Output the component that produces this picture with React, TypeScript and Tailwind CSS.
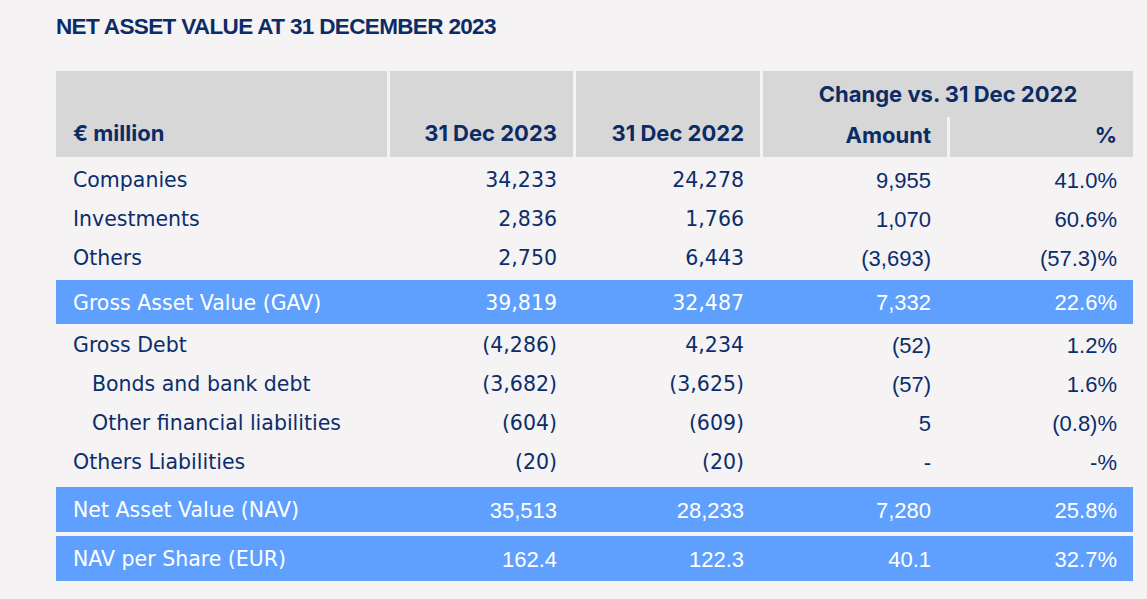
import React from 'react';

type Row = {
  label: string;
  values: [string, string, string, string];
  kind: 'plain' | 'sub' | 'band';
};

const body: Row[] = [
  { label: 'Companies', values: ['34,233', '24,278', '9,955', '41.0%'], kind: 'plain' },
  { label: 'Investments', values: ['2,836', '1,766', '1,070', '60.6%'], kind: 'plain' },
  { label: 'Others', values: ['2,750', '6,443', '(3,693)', '(57.3)%'], kind: 'plain' },
];

const debt: Row[] = [
  { label: 'Gross Debt', values: ['(4,286)', '4,234', '(52)', '1.2%'], kind: 'plain' },
  { label: 'Bonds and bank debt', values: ['(3,682)', '(3,625)', '(57)', '1.6%'], kind: 'sub' },
  { label: 'Other financial liabilities', values: ['(604)', '(609)', '5', '(0.8)%'], kind: 'sub' },
  { label: 'Others Liabilities', values: ['(20)', '(20)', '-', '-%'], kind: 'plain' },
];

const cols = 'grid grid-cols-[331px_183px_184px_184px_183px] gap-x-[3px]';
const geo = "font-['DejaVu_Sans',sans-serif] text-[20.5px]";
const arial = "font-['Liberation_Sans',Arial,sans-serif] text-[22px]";

const TableRow: React.FC<{ row: Row; height: string; arialAll?: boolean }> = ({ row, height, arialAll }) => {
  const band = row.kind === 'band';
  return (
    <div
      className={`${cols} ${height} leading-none pt-[2px] ${
        band ? 'bg-[#5f9ffe] text-white' : 'text-[#0c2d6b]'
      }`}
    >
      <div className={`flex items-center ${geo} ${row.kind === 'sub' ? 'pl-[36px]' : 'pl-[17px]'}`}>
        {row.label}
      </div>
      {row.values.map((v, i) => (
        <div key={i} className={`flex items-center justify-end pr-4 ${i >= 2 || arialAll ? arial : geo}`}>
          {v}
        </div>
      ))}
    </div>
  );
};

const App: React.FC = () => {
  const head = "bg-[#d7d7d7] text-[#0b2b64] font-['Inter',sans-serif] font-bold text-[22px] leading-none";

  return (
    <div className="min-h-screen bg-[#f5f3f4] pl-[56px] pt-[16px]">
      <h1 className="font-['Liberation_Sans',Arial,sans-serif] font-bold text-[22.5px] leading-[22px] tracking-[-0.65px] text-[#0b2c66]">
        NET ASSET VALUE AT 31 DECEMBER 2023
      </h1>

      <div className="mt-[33px] w-[1077px]">
        <div className={`${cols} grid-rows-[46px_40px]`}>
          <div className={`${head} row-span-2 flex items-end pb-[13px] pl-[17px]`}>€ million</div>
          <div className={`${head} row-span-2 flex items-end justify-end pb-[13px] pr-4`}>31 Dec 2023</div>
          <div className={`${head} row-span-2 flex items-end justify-end pb-[13px] pr-4`}>31 Dec 2022</div>
          <div className={`${head} col-span-2 flex items-center justify-center`}>Change vs. 31 Dec 2022</div>
          <div className={`${head} flex items-start justify-end pt-[7px] pr-4`}>Amount</div>
          <div className={`${head} flex items-start justify-end pt-[7px] pr-4`}>%</div>
        </div>

        <div className="mt-[3px]">
          {body.map((r) => (
            <TableRow key={r.label} row={r} height="h-[39px]" />
          ))}
        </div>

        <div className="mt-[3px]">
          <TableRow
            row={{ label: 'Gross Asset Value (GAV)', values: ['39,819', '32,487', '7,332', '22.6%'], kind: 'band' }}
            height="h-[44px]"
          />
        </div>

        <div className="mt-[1px]">
          {debt.map((r) => (
            <TableRow key={r.label} row={r} height="h-[39px]" />
          ))}
        </div>

        <div className="mt-[6px] flex flex-col gap-y-[4px]">
          <TableRow
            row={{ label: 'Net Asset Value (NAV)', values: ['35,513', '28,233', '7,280', '25.8%'], kind: 'band' }}
            height="h-[45px]"
            arialAll
          />
          <TableRow
            row={{ label: 'NAV per Share (EUR)', values: ['162.4', '122.3', '40.1', '32.7%'], kind: 'band' }}
            height="h-[45px]"
            arialAll
          />
        </div>
      </div>
    </div>
  );
};

export default App;
